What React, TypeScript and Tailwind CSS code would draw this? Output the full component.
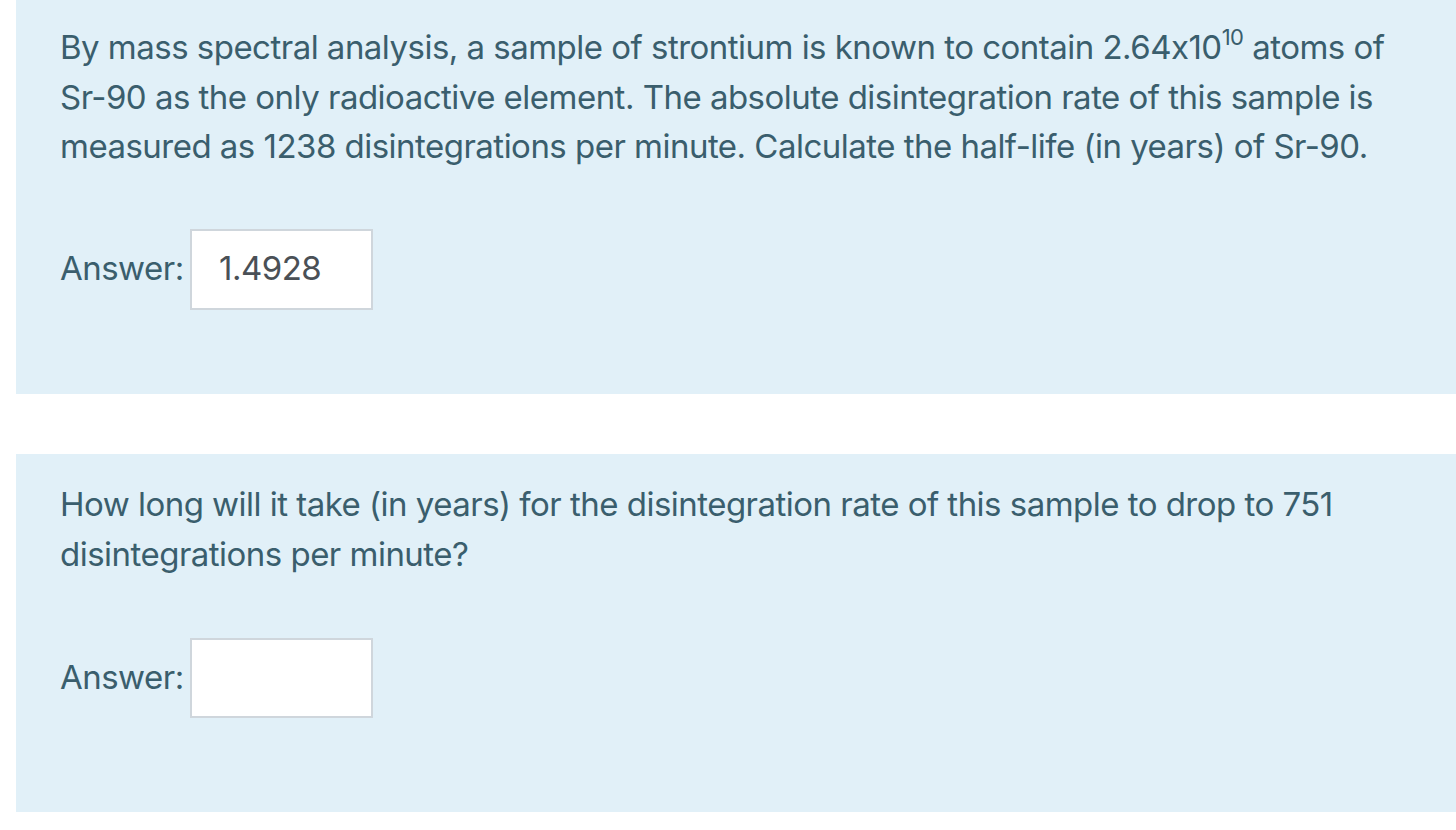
import React from "react";

export default function App() {
  const font = { fontFamily: "Inter, 'Noto Sans', sans-serif" };
  return (
    <div
      className="min-h-[830px] w-[1456px] bg-white pl-[16px] text-[#3a5e6d] [font-feature-settings:'calt'_0] tracking-[-0.52px]"
      style={font}
    >
      <div className="h-[394px] bg-[#e1f0f8] pl-[44px] pt-[23px]">
        <div className="text-[33px] leading-[49.5px] whitespace-nowrap">
          <div>
            By mass spectral analysis, a sample of strontium is known to contain 2.64x10
            <sup className="text-[22px] relative top-[-14px] align-baseline">10</sup> atoms of
          </div>
          <div>Sr-90 as the only radioactive element. The absolute disintegration rate of this sample is</div>
          <div>measured as 1238 disintegrations per minute. Calculate the half-life (in years) of Sr-90.</div>
        </div>
        <div className="mt-[57px] flex items-center">
          <span className="text-[33px] w-[130px]">Answer:</span>
          <div className="w-[183px] h-[81px] bg-white border-2 border-[#cfd6dc] flex items-center pl-[27px] text-[33px] text-[#4a5056]">
            1.4928
          </div>
        </div>
      </div>
      <div className="h-[60px]" />
      <div className="h-[358px] bg-[#e1f0f8] pl-[44px] pt-[26px]">
        <div className="text-[33px] leading-[49.5px] whitespace-nowrap">
          <div>How long will it take (in years) for the disintegration rate of this sample to drop to 751</div>
          <div>disintegrations per minute?</div>
        </div>
        <div className="mt-[59px] flex items-center">
          <span className="text-[33px] w-[130px]">Answer:</span>
          <div className="w-[183px] h-[80px] bg-white border-2 border-[#cfd6dc]" />
        </div>
      </div>
    </div>
  );
}
